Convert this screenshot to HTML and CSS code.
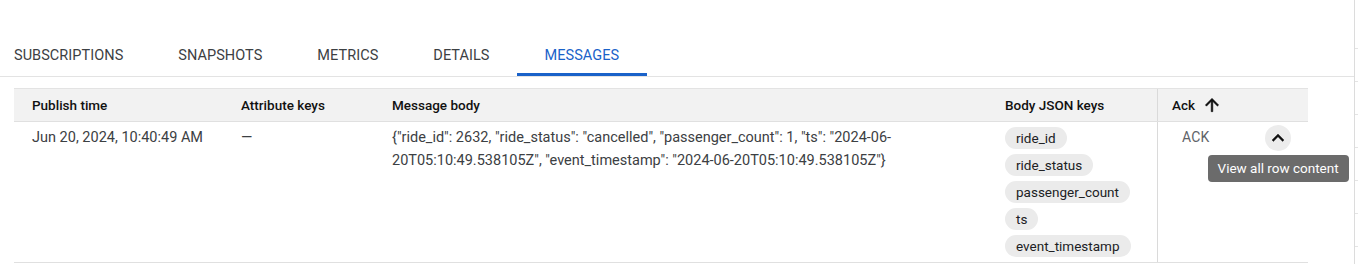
FILE: index.html
```html
<!DOCTYPE html>
<html lang="en">
<head>
<meta charset="utf-8">
<title>Messages</title>
<link rel="stylesheet" href="styles.css">
</head>
<body>
<div class="page">
  <div class="main">
    <nav class="tabs">
      <div class="tab">SUBSCRIPTIONS</div>
      <div class="tab">SNAPSHOTS</div>
      <div class="tab">METRICS</div>
      <div class="tab">DETAILS</div>
      <div class="tab active">MESSAGES</div>
    </nav>
    <div class="table">
      <div class="row head">
        <div class="cell c-time">Publish time</div>
        <div class="cell c-attr">Attribute keys</div>
        <div class="cell c-body">Message body</div>
        <div class="cell c-keys">Body JSON keys</div>
        <div class="cell c-ack">Ack
          <svg class="sort" viewBox="0 0 24 24" width="20" height="20"><path d="M4 12l1.41 1.41L11 7.83V20h2V7.83l5.58 5.59L20 12l-8-8-8 8z"/></svg>
        </div>
      </div>
      <div class="row data">
        <div class="cell c-time">Jun 20, 2024, 10:40:49 AM</div>
        <div class="cell c-attr">—</div>
        <div class="cell c-body">{"ride_id": 2632, "ride_status": "cancelled", "passenger_count": 1, "ts": "2024-06-20T05:10:49.538105Z", "event_timestamp": "2024-06-20T05:10:49.538105Z"}</div>
        <div class="cell c-keys">
          <span class="chip">ride_id</span>
          <span class="chip">ride_status</span>
          <span class="chip">passenger_count</span>
          <span class="chip">ts</span>
          <span class="chip">event_timestamp</span>
        </div>
        <div class="cell c-ack">
          <span class="ack-btn">ACK</span>
          <span class="expand">
            <svg viewBox="0 0 24 24" width="24" height="24"><path d="M12 8l-6 6 1.41 1.41L12 10.83l4.59 4.58L18 14z"/></svg>
            <span class="tooltip">View all row content</span>
          </span>
        </div>
      </div>
    </div>
  </div>
  <div class="strip">
    <div class="tick first"></div>
    <div class="tick"></div>
    <div class="tick"></div>
    <div class="tick"></div>
    <div class="tick"></div>
    <div class="tick"></div>
    <div class="tick"></div>
  </div>
</div>
</body>
</html>
```
FILE: styles.css
```css
html, body {
  margin: 0;
  padding: 0;
  background: #ffffff;
}
body {
  font-family: Roboto, "Liberation Sans", Arial, sans-serif;
  color: #202124;
  font-size: 14.5px;
  overflow: hidden;
}
.page {
  width: 1358px;
  height: 264px;
  display: flex;
}
.main {
  width: 1354px;
  height: 264px;
  border-right: 1px solid #dcdcdc;
  flex: none;
}
.strip {
  flex: 1;
  display: flex;
  flex-direction: column;
}
.tick {
  height: 32px;
  border-bottom: 1px solid #e4e4e4;
}
.tick.first {
  height: 48px;
}
.tabs {
  display: flex;
  margin-top: 38px;
  margin-left: -14px;
  border-bottom: 1px solid #e3e3e3;
}
.tab {
  height: 35px;
  padding: 0 27.5px;
  display: flex;
  align-items: center;
  font-size: 14.5px;
  font-weight: 400;
  letter-spacing: 0.05px;
  color: #3c4043;
  border-bottom: 3px solid transparent;
}
.tab:first-child {
  padding-left: 28px;
}
.tab.active {
  color: #1a62c9;
  border-bottom-color: #1a62c9;
}
.table {
  margin: 11px 0 0 14px;
  width: 1294px;
}
.row {
  display: grid;
  grid-template-columns: 209px 151px 613px 170px 151px;
}
.row.head {
  background: #f2f2f2;
  border-top: 1px solid #e3e3e3;
  border-bottom: 1px solid #e0e0e0;
  height: 32px;
}
.row.head .cell {
  display: flex;
  align-items: center;
  font-size: 13.5px;
  font-weight: 500;
  color: #111111;
}
.cell {
  padding-left: 18px;
  padding-right: 12px;
}
.row.data {
  border-bottom: 1px solid #e0e0e0;
}
.row.data .cell {
  padding-top: 4px;
  line-height: 23px;
  color: #3c4043;
}
.c-ack {
  border-left: 1px solid #dadada;
  padding-left: 14px !important;
}
.sort {
  margin-left: 7px;
  fill: #111111;
  stroke: #111111;
  stroke-width: 0.6;
}
.row.data .c-keys {
  padding-top: 5px;
  padding-bottom: 5px;
  display: flex;
  flex-direction: column;
  align-items: flex-start;
  gap: 5px;
}
.chip {
  display: inline-block;
  height: 22px;
  line-height: 22px;
  padding: 0 11px;
  border-radius: 11px;
  background: #ebebeb;
  color: #202124;
  font-size: 13.5px;
}
.row.data .c-ack {
  display: flex;
  align-items: flex-start;
}
.ack-btn {
  padding: 0 10px;
  font-size: 14px;
  color: #5f6368;
  letter-spacing: 0.2px;
}
.expand {
  position: relative;
  margin-left: 45px;
  margin-top: -1px;
  width: 26px;
  height: 26px;
  border-radius: 50%;
  background: #ececec;
  display: flex;
  align-items: center;
  justify-content: center;
}
.expand svg {
  fill: #111111;
  stroke: #111111;
  stroke-width: 0.4;
}
.tooltip {
  position: absolute;
  left: -57px;
  top: 30px;
  height: 27px;
  line-height: 27px;
  padding: 0 10px;
  border-radius: 4px;
  background: #6b6b6b;
  color: #ffffff;
  font-size: 13.5px;
  white-space: nowrap;
}
```
